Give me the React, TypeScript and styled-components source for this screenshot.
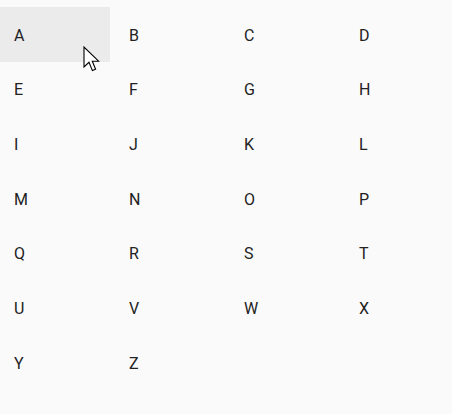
import styled, { createGlobalStyle } from 'styled-components';

const LETTERS = 'ABCDEFGHIJKLMNOPQRSTUVWXYZ'.split('');

const GlobalStyle = createGlobalStyle`
  html, body {
    margin: 0;
    padding: 0;
    background: #fafafa;
  }
  body {
    font-family: Roboto, "Liberation Sans", sans-serif;
  }
`;

const App = () => {
  return (
    <>
      <GlobalStyle />
      <St.Page>
        <St.LetterGrid>
          {LETTERS.map((letter, i) => (
            <St.LetterCell key={letter} $hovered={i === 0}>
              {letter}
            </St.LetterCell>
          ))}
        </St.LetterGrid>
        {/* 마우스 커서 */}
        <St.Cursor width="18" height="27" viewBox="0 0 18 27">
          <path
            d="M1 1 L1 21 L6 16.3 L9.4 24.6 L12.6 23.2 L9.3 15.2 L15.6 15.2 Z"
            fill="#fff"
            stroke="#000"
            strokeWidth="1.1"
            strokeLinejoin="miter"
          />
        </St.Cursor>
      </St.Page>
    </>
  );
};

export default App;

const St = {
  Page: styled.main`
    position: relative;
    width: 452px;
    height: 414px;
    padding-top: 7px;
    box-sizing: border-box;
    overflow: hidden;
  `,

  LetterGrid: styled.div`
    display: grid;
    grid-template-columns: repeat(4, 110px);
    grid-auto-rows: 54.67px;
    column-gap: 5px;
  `,

  LetterCell: styled.div<{ $hovered?: boolean }>`
    display: flex;
    align-items: center;
    padding-left: 14px;
    padding-top: 1.5px;
    font-size: 16px;
    color: #222;
    background: ${({ $hovered }) => ($hovered ? '#ebebeb' : 'transparent')};
  `,

  Cursor: styled.svg`
    position: absolute;
    left: 83px;
    top: 46px;
  `,
};
